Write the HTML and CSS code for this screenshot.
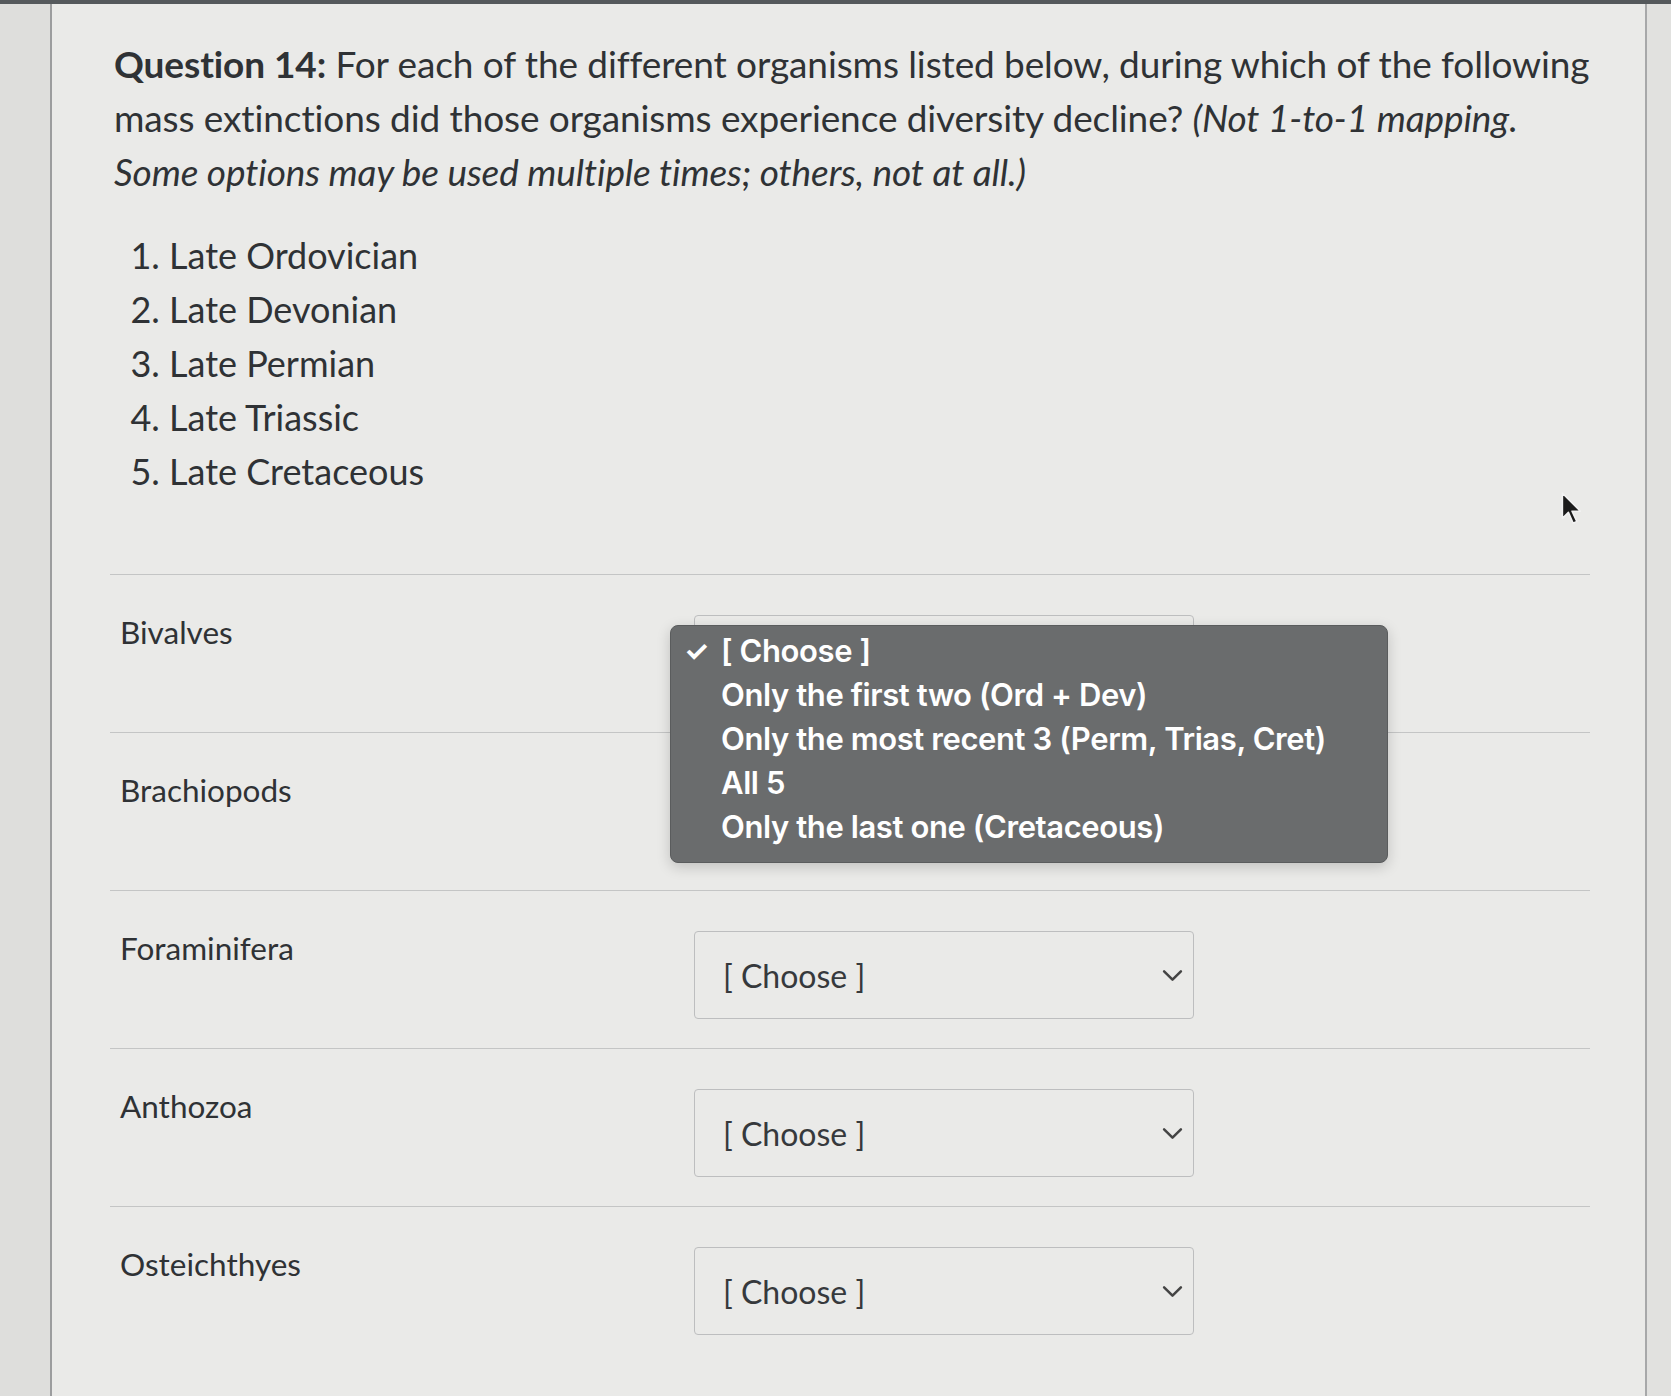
FILE: index.html
```html
<!DOCTYPE html>
<html lang="en">
<head>
<meta charset="utf-8">
<title>Question 14</title>
<link rel="stylesheet" href="styles.css">
</head>
<body>
<div class="topbar"></div>
<div class="frame">
  <aside class="side-left"></aside>
  <main class="content">
    <p class="question"><strong>Question 14:</strong> For each of the different organisms listed below, during which of the following<br>mass extinctions did those organisms experience diversity decline? <em>(Not 1-to-1 mapping.<br>Some options may be used multiple times; others, not at all.)</em></p>
    <ol class="periods">
      <li>Late Ordovician</li>
      <li>Late Devonian</li>
      <li>Late Permian</li>
      <li>Late Triassic</li>
      <li>Late Cretaceous</li>
    </ol>
    <div class="matches">
      <div class="match-row">
        <div class="match-label">Bivalves</div>
        <div class="select"><span>[ Choose ]</span><svg class="chev" viewBox="0 0 20 12"><path d="M2 2 L10 10 L18 2" fill="none" stroke="#444" stroke-width="2.4" stroke-linecap="round" stroke-linejoin="round"/></svg></div>
      </div>
      <div class="match-row">
        <div class="match-label">Brachiopods</div>
        <div class="select"><span>[ Choose ]</span><svg class="chev" viewBox="0 0 20 12"><path d="M2 2 L10 10 L18 2" fill="none" stroke="#444" stroke-width="2.4" stroke-linecap="round" stroke-linejoin="round"/></svg></div>
      </div>
      <div class="match-row">
        <div class="match-label">Foraminifera</div>
        <div class="select"><span>[ Choose ]</span><svg class="chev" viewBox="0 0 20 12"><path d="M2 2 L10 10 L18 2" fill="none" stroke="#444" stroke-width="2.4" stroke-linecap="round" stroke-linejoin="round"/></svg></div>
      </div>
      <div class="match-row">
        <div class="match-label">Anthozoa</div>
        <div class="select"><span>[ Choose ]</span><svg class="chev" viewBox="0 0 20 12"><path d="M2 2 L10 10 L18 2" fill="none" stroke="#444" stroke-width="2.4" stroke-linecap="round" stroke-linejoin="round"/></svg></div>
      </div>
      <div class="match-row">
        <div class="match-label">Osteichthyes</div>
        <div class="select"><span>[ Choose ]</span><svg class="chev" viewBox="0 0 20 12"><path d="M2 2 L10 10 L18 2" fill="none" stroke="#444" stroke-width="2.4" stroke-linecap="round" stroke-linejoin="round"/></svg></div>
      </div>
    </div>
  </main>
  <aside class="side-right"></aside>
</div>
<ul class="menu">
  <li class="checked"><span class="check">✓</span>[ Choose ]</li>
  <li>Only the first two (Ord + Dev)</li>
  <li>Only the most recent 3 (Perm, Trias, Cret)</li>
  <li>All 5</li>
  <li>Only the last one (Cretaceous)</li>
</ul>
<svg class="cursor" viewBox="0 0 20 30"><path d="M2 1 L2 22 L7 17 L11 26 L14 24.5 L10 16 L17 16 Z" fill="#1b1b1b" stroke="#f2f2f2" stroke-width="1.3" stroke-linejoin="round"/></svg>
</body>
</html>
```
FILE: styles.css
```css
* { box-sizing: border-box; }
html, body { margin: 0; padding: 0; }
body {
  width: 1671px;
  height: 1396px;
  overflow: hidden;
  background: #e8e8e6;
  font-family: Lato, "Open Sans", sans-serif;
  color: #2f3235;
  position: relative;
}
.topbar { height: 4px; background: #55595c; }
.frame { display: flex; height: 1392px; }
.side-left {
  width: 52px;
  background: #dededc;
  border-right: 2px solid #9c9d9e;
}
.side-right {
  width: 26px;
  background: #e1e1df;
  border-left: 2px solid #a7a8a9;
}
.content {
  flex: 1;
  background: #eaeae8;
  padding: 33px 55px 0 58px;
}
.question {
  margin: 0 0 0 4px;
  font-size: 37px;
  line-height: 54px;
  letter-spacing: -0.1px;
}
.question strong { font-weight: 700; }
.question em { font-style: italic; }
.periods {
  margin: 29px 0 0;
  padding-left: 59px;
  font-size: 36px;
  line-height: 54px;
}
.matches { margin-top: 76px; }
.match-row {
  display: flex;
  align-items: flex-start;
  height: 158px;
  border-top: 1.5px solid #c4c5c5;
  padding: 37px 0 0 10px;
}
.match-label {
  width: 574px;
  font-size: 31.5px;
  line-height: 40px;
}
.select {
  width: 500px;
  height: 88px;
  margin-top: 3px;
  border: 1.5px solid #bdbebf;
  border-radius: 4px;
  display: flex;
  align-items: center;
  justify-content: space-between;
  padding: 0 10px 0 28px;
  font-size: 32px;
  color: #36393c;
}
.chev { width: 21px; height: 13px; }
.menu {
  position: absolute;
  left: 670px;
  top: 625px;
  width: 718px;
  height: 238px;
  margin: 0;
  padding: 3px 0 0 50px;
  list-style: none;
  background: #6a6c6d;
  border: 1px solid #5a5c5d;
  border-radius: 8px;
  box-shadow: 0 4px 14px rgba(0,0,0,0.18);
  font-family: Inter, "Liberation Sans", sans-serif;
  font-weight: 600;
  font-size: 31px;
  line-height: 44px;
  color: #ffffff;
  letter-spacing: -0.4px;
}
.menu li { position: relative; }
.check {
  position: absolute;
  left: -37px;
  font-size: 28px;
  font-weight: 700;
}
.cursor {
  position: absolute;
  left: 1560px;
  top: 492px;
  width: 24px;
  height: 36px;
}
```
